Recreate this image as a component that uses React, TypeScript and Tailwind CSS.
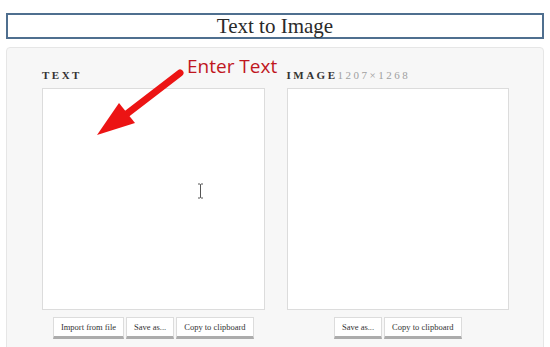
const serif = { fontFamily: '"Liberation Serif", "Times New Roman", serif' };

function Btn({ label }: { label: string }) {
  return (
    <button
      className="h-[22px] px-[7px] bg-white border border-[#dcdcdc] border-b-[3px] border-b-[#acacac] text-[8.5px] leading-none text-[#333]"
      style={serif}
    >
      {label}
    </button>
  );
}

export default function App() {
  return (
    <div className="relative w-[550px] h-[347px] overflow-hidden bg-white px-[6px] pt-[13px]">
      <h1
        className="h-[26px] border-2 border-[#4f6f8f] text-center text-[21px] leading-[22px] text-[#2a2a2a]"
        style={serif}
      >
        Text to Image
      </h1>

      <div className="mt-[8px] h-[320px] rounded border border-[#e6e6e6] bg-[#f7f7f7] pl-[35px] pr-[34px] pt-[20px]">
        <div className="grid grid-cols-2 gap-[22px]">
          <section>
            <h2
              className="h-[14px] mb-[6px] text-[11px] leading-[14px] font-bold tracking-[2.5px] text-[#333]"
              style={serif}
            >
              TEXT
            </h2>
            <div className="h-[222px] border border-[#dcdcdc] bg-white" />
            <div className="mt-[7px] flex justify-center gap-[2px]">
              <Btn label="Import from file" />
              <Btn label="Save as..." />
              <Btn label="Copy to clipboard" />
            </div>
          </section>

          <section>
            <h2
              className="h-[14px] mb-[6px] text-[11px] leading-[14px] tracking-[2.5px] text-[#333]"
              style={serif}
            >
              <span className="font-bold">IMAGE</span>
              <span className="text-[#a0a0a0]">1207×1268</span>
            </h2>
            <div className="h-[222px] border border-[#dcdcdc] bg-white" />
            <div className="mt-[7px] flex justify-center gap-[2px]">
              <Btn label="Save as..." />
              <Btn label="Copy to clipboard" />
            </div>
          </section>
        </div>
      </div>

      {/* annotation overlay */}
      <span
        className="absolute left-[187px] top-[57px] text-[19px] leading-none text-[#c0161e]"
        style={{ fontFamily: '"Open Sans", "Noto Sans", sans-serif' }}
      >
        Enter Text
      </span>
      <svg className="absolute left-0 top-0 pointer-events-none" width="550" height="347">
        <line x1="180" y1="73" x2="124" y2="116" stroke="#ec1414" strokeWidth="7" strokeLinecap="round" />
        <polygon points="97,135 119,103 135,123" fill="#ec1414" />
      </svg>

      {/* text cursor */}
      <svg className="absolute left-[197px] top-[183px]" width="7" height="16" viewBox="0 0 7 16">
        <path d="M1 1h2l0.5 0.5L4 1h2M3.5 1.5v13M1 15h2l0.5-0.5L4 15h2" stroke="#555" strokeWidth="1" fill="none" />
      </svg>
    </div>
  );
}
